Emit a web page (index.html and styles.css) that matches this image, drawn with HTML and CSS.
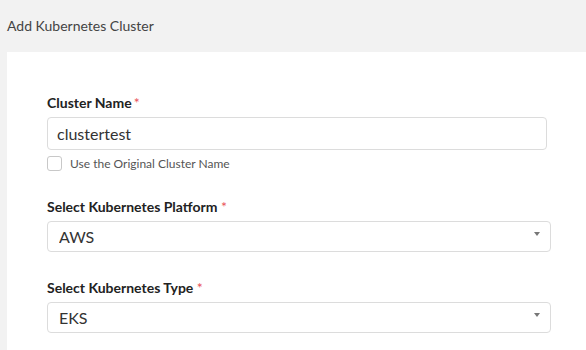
FILE: index.html
```html
<!DOCTYPE html>
<html lang="en">
  <head>
    <title>Add Kubernetes Cluster</title>
    <link rel="stylesheet" href="styles.css">
  </head>
  <body>
    <div class="page">
      <div class="pageHeader">Add Kubernetes Cluster</div>
      <div class="panel">
        <div class="field">
          <label class="fieldLabel" for="clusterName">Cluster Name<span class="required tight">*</span></label>
          <input id="clusterName" class="textInput" type="text" value="clustertest">
          <label class="checkRow">
            <span class="checkBox"></span>
            <span class="checkText">Use the Original Cluster Name</span>
          </label>
        </div>
        <div class="field">
          <label class="fieldLabel" for="platform">Select Kubernetes Platform <span class="required">*</span></label>
          <div class="selectWrap">
            <select id="platform" class="selectInput">
              <option>AWS</option>
            </select>
            <span class="caret"></span>
          </div>
        </div>
        <div class="field">
          <label class="fieldLabel" for="type">Select Kubernetes Type <span class="required">*</span></label>
          <div class="selectWrap">
            <select id="type" class="selectInput">
              <option>EKS</option>
            </select>
            <span class="caret"></span>
          </div>
        </div>
      </div>
    </div>
  </body>
</html>
```

FILE: styles.css
```css
html, body {
  margin: 0;
  padding: 0;
  background-color: #f2f2f2;
  font-family: Lato, 'Open Sans', sans-serif;
  color: #333;
}
.page {
  display: flex;
  flex-direction: column;
  height: 350px;
  overflow: hidden;
}
.pageHeader {
  height: 52px;
  padding: 0 7px;
  font-size: 14px;
  line-height: 52px;
  color: #444;
  box-sizing: border-box;
}
.panel {
  flex: 1;
  margin-left: 7px;
  background-color: #fff;
  padding: 41px 0 0 40px;
  display: flex;
  flex-direction: column;
  gap: 26px;
}
.field {
  display: flex;
  flex-direction: column;
}
.fieldLabel {
  font-size: 14px;
  line-height: 20px;
  font-weight: bold;
  color: #222;
  margin-bottom: 4px;
}
.required {
  color: #e9525a;
  font-weight: normal;
}
.tight {
  margin-left: 2px;
}
.textInput {
  width: 500px;
  height: 33px;
  box-sizing: border-box;
  border: 1px solid #dcdcdc;
  border-radius: 4px;
  padding: 0 9px;
  font-family: inherit;
  font-size: 16px;
  color: #333;
  outline: none;
}
.checkRow {
  display: flex;
  align-items: center;
  margin-top: 6px;
  gap: 8px;
}
.checkBox {
  width: 15px;
  height: 15px;
  box-sizing: border-box;
  border: 1px solid #c8c8c8;
  border-radius: 3px;
  background: #fff;
}
.checkText {
  font-size: 12px;
  color: #555;
}
.selectWrap {
  position: relative;
  width: 504px;
}
.selectInput {
  appearance: none;
  -webkit-appearance: none;
  width: 100%;
  height: 31px;
  box-sizing: border-box;
  border: 1px solid #dcdcdc;
  border-radius: 4px;
  padding: 0 11px;
  background: #fff;
  font-family: inherit;
  font-size: 16px;
  color: #333;
  outline: none;
}
.caret {
  position: absolute;
  right: 11px;
  top: 11px;
  width: 0;
  height: 0;
  border-left: 3px solid transparent;
  border-right: 3px solid transparent;
  border-top: 4px solid #777;
}
```
